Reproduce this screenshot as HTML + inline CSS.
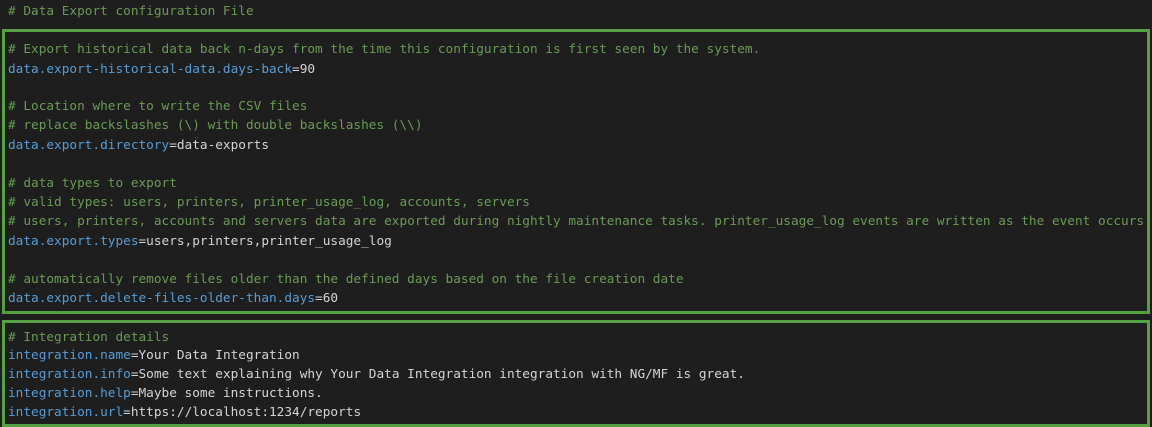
<!DOCTYPE html><html><head><style>
body{margin:0;width:1152px;height:427px;background:#1e1e1e;overflow:hidden;position:relative;font-family:"DejaVu Sans Mono","Liberation Mono",monospace;font-size:12.75px;}
.l{position:absolute;left:8px;height:19px;line-height:19px;white-space:pre;color:#d4d4d4}
.c{color:#6a9955}.k{color:#569cd6}
.b{position:absolute;border:3px solid #55a043;box-sizing:border-box}
</style></head><body>
<div class="b" style="left:2px;top:29px;width:1148px;height:285px"></div>
<div class="b" style="left:2px;top:320px;width:1148px;height:107px"></div>
<div class="l c" style="top:2px"># Data Export configuration File</div>
<div class="l c" style="top:40px"># Export historical data back n-days from the time this configuration is first seen by the system.</div>
<div class="l" style="top:60px"><span class="k">data.export-historical-data.days-back</span>=90</div>
<div class="l c" style="top:97px"># Location where to write the CSV files</div>
<div class="l c" style="top:116px"># replace backslashes (\) with double backslashes (\\)</div>
<div class="l" style="top:136px"><span class="k">data.export.directory</span>=data-exports</div>
<div class="l c" style="top:174px"># data types to export</div>
<div class="l c" style="top:193px"># valid types: users, printers, printer_usage_log, accounts, servers</div>
<div class="l c" style="top:212px"># users, printers, accounts and servers data are exported during nightly maintenance tasks. printer_usage_log events are written as the event occurs</div>
<div class="l" style="top:232px"><span class="k">data.export.types</span>=users,printers,printer_usage_log</div>
<div class="l c" style="top:270px"># automatically remove files older than the defined days based on the file creation date</div>
<div class="l" style="top:289px"><span class="k">data.export.delete-files-older-than.days</span>=60</div>
<div class="l c" style="top:328px"># Integration details</div>
<div class="l" style="top:346px"><span class="k">integration.name</span>=Your Data Integration</div>
<div class="l" style="top:365px"><span class="k">integration.info</span>=Some text explaining why Your Data Integration integration with NG/MF is great.</div>
<div class="l" style="top:384px"><span class="k">integration.help</span>=Maybe some instructions.</div>
<div class="l" style="top:403px"><span class="k">integration.url</span>=https://localhost:1234/reports</div>
</body></html>
